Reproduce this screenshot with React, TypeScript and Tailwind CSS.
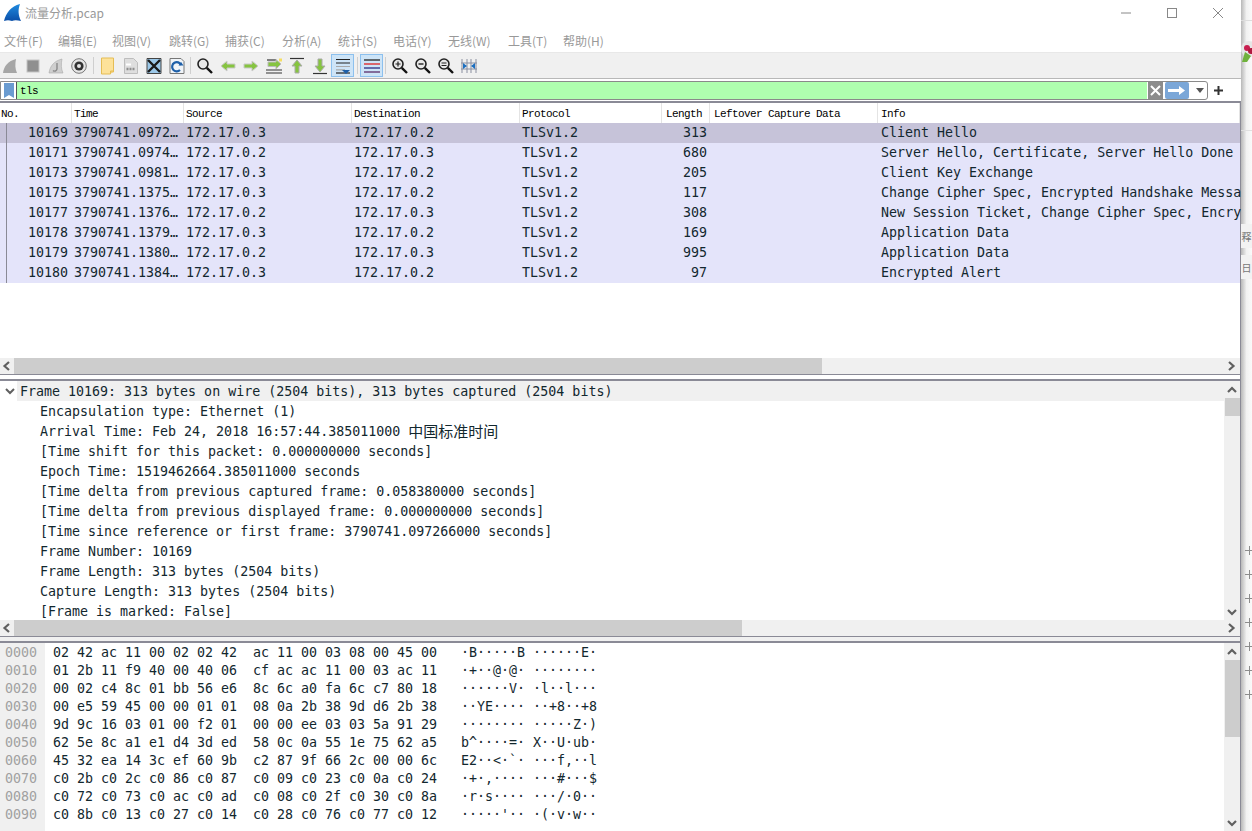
import React from "react";

const MONO = "font-['DejaVu_Sans_Mono','Noto_Sans_CJK_SC',monospace]";

const rows = [
  ["10169", "3790741.0972…", "172.17.0.3", "172.17.0.2", "313", "Client Hello"],
  ["10171", "3790741.0974…", "172.17.0.2", "172.17.0.3", "680", "Server Hello, Certificate, Server Hello Done"],
  ["10173", "3790741.0981…", "172.17.0.3", "172.17.0.2", "205", "Client Key Exchange"],
  ["10175", "3790741.1375…", "172.17.0.3", "172.17.0.2", "117", "Change Cipher Spec, Encrypted Handshake Messa"],
  ["10177", "3790741.1376…", "172.17.0.2", "172.17.0.3", "308", "New Session Ticket, Change Cipher Spec, Encry"],
  ["10178", "3790741.1379…", "172.17.0.3", "172.17.0.2", "169", "Application Data"],
  ["10179", "3790741.1380…", "172.17.0.2", "172.17.0.3", "995", "Application Data"],
  ["10180", "3790741.1384…", "172.17.0.3", "172.17.0.2", "97", "Encrypted Alert"],
];

const menus = [
  ["文件(F)", "w-[54px]"],
  ["编辑(E)", "w-[54px]"],
  ["视图(V)", "w-[57px]"],
  ["跳转(G)", "w-[56px]"],
  ["捕获(C)", "w-[57px]"],
  ["分析(A)", "w-[56px]"],
  ["统计(S)", "w-[55px]"],
  ["电话(Y)", "w-[55px]"],
  ["无线(W)", "w-[60px]"],
  ["工具(T)", "w-[55px]"],
  ["帮助(H)", "w-[55px]"],
];

const details = [
  "Encapsulation type: Ethernet (1)",
  "ARRIVAL",
  "[Time shift for this packet: 0.000000000 seconds]",
  "Epoch Time: 1519462664.385011000 seconds",
  "[Time delta from previous captured frame: 0.058380000 seconds]",
  "[Time delta from previous displayed frame: 0.000000000 seconds]",
  "[Time since reference or first frame: 3790741.097266000 seconds]",
  "Frame Number: 10169",
  "Frame Length: 313 bytes (2504 bits)",
  "Capture Length: 313 bytes (2504 bits)",
  "[Frame is marked: False]",
];

const hex = [
  ["0000", "02 42 ac 11 00 02 02 42", "ac 11 00 03 08 00 45 00", "·B·····B", "······E·"],
  ["0010", "01 2b 11 f9 40 00 40 06", "cf ac ac 11 00 03 ac 11", "·+··@·@·", "········"],
  ["0020", "00 02 c4 8c 01 bb 56 e6", "8c 6c a0 fa 6c c7 80 18", "······V·", "·l··l···"],
  ["0030", "00 e5 59 45 00 00 01 01", "08 0a 2b 38 9d d6 2b 38", "··YE····", "··+8··+8"],
  ["0040", "9d 9c 16 03 01 00 f2 01", "00 00 ee 03 03 5a 91 29", "········", "·····Z·)"],
  ["0050", "62 5e 8c a1 e1 d4 3d ed", "58 0c 0a 55 1e 75 62 a5", "b^····=·", "X··U·ub·"],
  ["0060", "45 32 ea 14 3c ef 60 9b", "c2 87 9f 66 2c 00 00 6c", "E2··<·`·", "···f,··l"],
  ["0070", "c0 2b c0 2c c0 86 c0 87", "c0 09 c0 23 c0 0a c0 24", "·+·,····", "···#···$"],
  ["0080", "c0 72 c0 73 c0 ac c0 ad", "c0 08 c0 2f c0 30 c0 8a", "·r·s····", "···/·0··"],
  ["0090", "c0 8b c0 13 c0 27 c0 14", "c0 28 c0 76 c0 77 c0 12", "·····'··", "·(·v·w··"],
];

const Chevron = ({ d }: { d: "l" | "r" | "u" | "d" }) => {
  const p = { l: "M8 2 3.5 6 8 10", r: "M4 2l4.5 4L4 10", u: "M2 8l4-4 4 4", d: "M2 4l4 4 4-4" }[d];
  return (
    <svg width="12" height="12" viewBox="0 0 12 12" fill="none" stroke="#606060" strokeWidth="2.2">
      <path d={p} />
    </svg>
  );
};

const HScroll = ({ thumb, className }: { thumb: string; className: string }) => (
  <div className={`flex items-stretch bg-[#f0f0f0] ${className}`}>
    <div className="flex w-[14px] items-center justify-center"><Chevron d="l" /></div>
    <div className={`bg-[#cdcdcd] ${thumb}`} />
    <div className="flex flex-1 items-center justify-end pr-[3px]"><Chevron d="r" /></div>
  </div>
);

const VScroll = ({ thumb }: { thumb: string }) => (
  <div className="flex w-[16px] shrink-0 flex-col items-center bg-[#f0f0f0]">
    <div className="flex h-[17px] w-full items-center justify-center"><Chevron d="u" /></div>
    <div className={`w-[15px] bg-[#cdcdcd] ${thumb}`} />
    <div className="flex-1" />
    <div className="flex h-[17px] w-full items-center justify-center"><Chevron d="d" /></div>
  </div>
);

const Sep = ({ w }: { w: string }) => (
  <div className={`flex h-full items-center justify-center ${w}`}>
    <div className="h-[17px] w-px bg-[#cfcfcf]" />
  </div>
);

const Ico = ({ active, children }: { active?: boolean; children: React.ReactNode }) => (
  <div className={`flex h-[23px] w-[23px] items-center justify-center ${active ? "border border-[#8cc0ee] bg-[#cde4f7]" : ""}`}>
    <svg width="18" height="18" viewBox="0 0 18 18" fill="none">{children}</svg>
  </div>
);

const Glass = ({ sign }: { sign?: "+" | "-" | "=" | "" }) => (
  <>
    <circle cx="7" cy="7" r="5" fill="#e8e8e8" stroke="#222" strokeWidth="1.6" />
    <path d="M10.8 10.8 16 16" stroke="#111" strokeWidth="2.4" />
    {sign === "+" && <path d="M4.5 7h5M7 4.5v5" stroke="#222" strokeWidth="1.2" />}
    {sign === "-" && <path d="M4.5 7h5" stroke="#222" strokeWidth="1.4" />}
    {sign === "=" && <path d="M4.5 6h5M4.5 8.5h5" stroke="#222" strokeWidth="1.1" />}
  </>
);

const Toolbar = () => (
  <div className="ml-[-2px] flex h-[25px] items-center bg-[#f0f0f0]">
    <Ico><path d="M2 16C3 9 7 4 15 2c-1 5-1 10 1 14Z" fill="#a6a6a6" /></Ico>
    <Ico><rect x="3" y="3" width="12" height="12" fill="#8f8f8f" stroke="#c4c4c4" /></Ico>
    <Ico>
      <path d="M2 16C3 9 7 4 15 2c-1 5-1 10 1 14Z" fill="#cfcfcf" stroke="#aaa" strokeWidth=".6" />
      <path d="M10 6v6a2.4 2.4 0 0 1-4 1.5" stroke="#8a8a8a" strokeWidth="1.4" />
    </Ico>
    <Ico>
      <circle cx="9" cy="9" r="7.3" fill="#e6e6e6" stroke="#777" />
      <circle cx="9" cy="9" r="4.6" fill="#333" />
      <circle cx="9" cy="9" r="2" fill="#e6e6e6" />
    </Ico>
    <Sep w="w-[6px]" />
    <Ico>
      <path d="M2.5 1h12v14h-3v2h-9Z" fill="#fde29a" stroke="#e5bd55" />
      <path d="M11.5 17v-3h3" fill="#f6ce6b" stroke="#e5bd55" />
    </Ico>
    <Ico>
      <path d="M2.5 1.5h9l4 4v11h-13Z" fill="#dedede" stroke="#bdbdbd" />
      <path d="M4 7.5h5" stroke="#fff" strokeWidth="2" />
      <path d="M4.5 12h9" stroke="#8e8e8e" strokeWidth="2.4" strokeDasharray="2 1" />
    </Ico>
    <Ico>
      <path d="M2 1.500h14v15H2Z" fill="#9cc8e8" stroke="#444" />
      <path d="M3 3l12 12M15 3 3 15" stroke="#1a1a1a" strokeWidth="2.4" />
    </Ico>
    <Ico>
      <path d="M2 1.500h11l3 3v12H2Z" fill="#f0f4f8" stroke="#777" />
      <path d="M13 8a4.6 4.6 0 1 0-1 5" stroke="#1d5fa8" strokeWidth="2.2" />
      <path d="M10.500 8.500h5l-2.400-3.500Z" fill="#1d5fa8" />
    </Ico>
    <Sep w="w-[5px]" />
    <Ico><Glass /></Ico>
    <Ico><path d="M2 9l6-5v3h8v4H8v3Z" fill="#86c440" stroke="#c9c9c9" /></Ico>
    <Ico><path d="M16 9l-6-5v3H2v4h8v3Z" fill="#86c440" stroke="#c9c9c9" /></Ico>
    <Ico>
      <path d="M1 13h16M1 16h16" stroke="#333" strokeWidth="1.2" />
      <path d="M2 3h9" stroke="#333" strokeWidth="1.2" />
      <path d="M16 7l-5-4.500V5H3v4.500h8V12Z" fill="#86c440" stroke="#bbb" />
      <rect x="14" y="1.500" width="3" height="3" fill="#f5de62" />
    </Ico>
    <Ico>
      <path d="M2 1.500h14" stroke="#333" strokeWidth="1.2" />
      <path d="M9 3l5 6h-3v7H7V9H4Z" fill="#86c440" stroke="#aaa" />
    </Ico>
    <Ico>
      <path d="M2 16.500h14" stroke="#333" strokeWidth="1.2" />
      <path d="M9 15l5-6h-3V2H7v7H4Z" fill="#86c440" stroke="#aaa" />
    </Ico>
    <Ico active>
      <path d="M2 2.500h14M2 6h14" stroke="#222" strokeWidth="1.2" />
      <path d="M2 9.500h14M2 12.800h9" stroke="#a8a8a8" strokeWidth="1.2" />
      <path d="M2 16h14" stroke="#222" strokeWidth="1.2" />
      <path d="M8 13h8l-4 4Z" fill="#1d5fa8" />
    </Ico>
    <Sep w="w-[6px]" />
    <Ico active>
      <path d="M1 3h16" stroke="#222" strokeWidth="1.3" />
      <path d="M1 7h16" stroke="#e02020" strokeWidth="1.3" />
      <path d="M1 11h16" stroke="#2b2b80" strokeWidth="1.3" />
      <path d="M1 15h16" stroke="#5a2a6a" strokeWidth="1.3" />
    </Ico>
    <Sep w="w-[5px]" />
    <Ico><Glass sign="+" /></Ico>
    <Ico><Glass sign="-" /></Ico>
    <Ico><Glass sign="=" /></Ico>
    <Ico>
      <path d="M2 2v14M7 2v14M11 2v14M16 2v14M1 6h16M1 12h16" stroke="#8a8fa0" strokeWidth="1" />
      <path d="M3 6l4 3-4 3ZM15 6l-4 3 4 3Z" fill="#1d6fc0" />
    </Ico>
  </div>
);

const FilterBar = () => (
  <div className="flex h-[22px] shrink-0 items-start pt-[2px]">
    <div className="flex h-[19px] w-[1208px] items-stretch rounded-r-[3px] border border-[#8a8a8a] bg-white">
      <div className="flex w-[16px] items-center justify-center border-r border-[#555]">
        <svg width="10" height="15" viewBox="0 0 10 15"><path d="M0 0h10v15L5 12 0 15Z" fill="#6a9bd0" /></svg>
      </div>
      <div className="flex flex-1 items-center bg-[#afffaf] pl-[3px] pt-[2px] font-['Liberation_Mono',monospace] text-[11px] tracking-[-0.6px] text-black">tls</div>
      <div className="ml-px flex w-[15px] items-center justify-center bg-[#8c8c8c]">
        <svg width="11" height="11" viewBox="0 0 11 11"><path d="M1 1l9 9M10 1l-9 9" stroke="#fff" strokeWidth="2" /></svg>
      </div>
      <div className="ml-[2px] flex w-[24px] items-center justify-center rounded-[2px] bg-[#7ba7d8]">
        <svg width="18" height="9" viewBox="0 0 18 9"><path d="M0 3h11V0l6 4.500L11 9V6H0Z" fill="#fff" /></svg>
      </div>
      <div className="flex w-[18px] items-center justify-end pr-[3px]">
        <svg width="8" height="5" viewBox="0 0 8 5"><path d="M0 0h8L4 5Z" fill="#555" /></svg>
      </div>
    </div>
    <div className="flex h-[19px] w-[20px] items-center justify-center">
      <svg width="9" height="9" viewBox="0 0 9 9"><path d="M4.500 0v9M0 4.500h9" stroke="#333" strokeWidth="2" /></svg>
    </div>
  </div>
);

const COLS = "grid grid-cols-[72px_112px_168px_168px_142px_48px_168px_1fr]";
const HEAD = ["No.", "Time", "Source", "Destination", "Protocol", "Length", "Leftover Capture Data", "Info"];

const PacketList = () => (
  <div className="flex h-[274px] shrink-0 flex-col border-t-2 border-r border-b border-[#8a8a96] bg-white">
    <div className={`${COLS} h-[20px] shrink-0 items-center font-['Liberation_Mono',monospace] text-[11px] tracking-[-0.6px] text-black`}>
      {HEAD.map((h, i) => (
        <div key={h} className={`flex h-full items-center border-r border-[#e4e4e4] pt-[2px] ${i === 0 ? "pl-px" : i === 5 || i === 6 ? "pl-[4px]" : i === 7 ? "pl-[3px]" : "pl-[2px]"}`}>{h}</div>
      ))}
    </div>
    <div className={`flex-1 text-[13.3px] text-[#12272e] ${MONO}`}>
      {rows.map((r, i) => (
        <div key={r[0]} className={`${COLS} h-[20px] items-center ${i === 0 ? "bg-[#c6c3d9]" : "bg-[#e4e4fa]"}`}>
          <div className="flex h-full items-center">
            <span className="ml-[6px] h-full w-px bg-[#8a8a96]" />
            <span className="flex-1 pr-[4px] text-right">{r[0]}</span>
          </div>
          <div className="whitespace-nowrap pl-[2px]">{r[1]}</div>
          <div className="pl-[2px]">{r[2]}</div>
          <div className="pl-[2px]">{r[3]}</div>
          <div className="pl-[2px]">TLSv1.2</div>
          <div className="pr-[3px] text-right">{r[4]}</div>
          <div />
          <div className="whitespace-nowrap pl-[3px]">{r[5]}</div>
        </div>
      ))}
    </div>
    <HScroll thumb="w-[808px]" className="h-[16px] shrink-0" />
  </div>
);

const DetailsPane = () => (
  <div className="flex h-[258px] shrink-0 flex-col border-t-2 border-r border-b border-[#8a8a96] bg-white">
    <div className="flex min-h-0 flex-1">
      <div className={`min-w-0 flex-1 overflow-hidden text-[13.3px] text-[#12272e] ${MONO}`}>
        <div className="flex h-[20px] items-center">
          <div className="flex w-[17px] shrink-0 items-center justify-center pl-[2px]">
            <svg width="12" height="12" viewBox="0 0 12 12" fill="none" stroke="#606060" strokeWidth="2"><path d="M2 4l4 4 4-4" /></svg>
          </div>
          <div className="flex h-full flex-1 items-center whitespace-pre bg-[#f0f0f0] pl-[3px] pt-[2px]">Frame 10169: 313 bytes on wire (2504 bits), 313 bytes captured (2504 bits)</div>
        </div>
        {details.map((d) => (
          <div key={d} className="flex h-[20px] items-center whitespace-pre pl-[40px] pt-[2px]">
            {d === "ARRIVAL" ? (
              <>Arrival Time: Feb 24, 2018 16:57:44.385011000 <span className="text-[15px]">中国标准时间</span></>
            ) : d}
          </div>
        ))}
      </div>
      <VScroll thumb="h-[18px]" />
    </div>
    <HScroll thumb="w-[728px]" className="h-[16px] shrink-0" />
  </div>
);

const HexPane = () => (
  <div className="flex min-h-0 flex-1 border-t-2 border-r border-[#8a8a96] bg-white">
    <div className={`flex min-w-0 flex-1 text-[13.3px] text-[#12272e] ${MONO}`}>
      <div className="w-[45px] shrink-0 bg-[#f0f0f0] pl-[5px] text-[#a0a0a0]">
        {hex.map((r) => <div key={r[0]} className="flex h-[18px] items-center pt-[2px]">{r[0]}</div>)}
      </div>
      <div className="pl-[8px]">
        {hex.map((r) => (
          <div key={r[0]} className="flex h-[18px] items-center whitespace-pre pt-[2px]">
            <span className="w-[200px]">{r[1]}</span>
            <span className="w-[208px]">{r[2]}</span>
            <span className="w-[72px]">{r[3]}</span>
            <span>{r[4]}</span>
          </div>
        ))}
      </div>
    </div>
    <VScroll thumb="h-[77px]" />
  </div>
);

const Fin = () => (
  <svg width="18" height="18" viewBox="0 0 18 18">
    <defs>
      <linearGradient id="fin" x1="0" y1="0" x2="0" y2="1">
        <stop offset="0" stopColor="#1f8be0" />
        <stop offset="1" stopColor="#0b4fa8" />
      </linearGradient>
    </defs>
    <path d="M0 17C2 9 7 2 16 0c-2 5-2 11 1 17-4-1-7-1-9 0-3-1-5-1-8 0Z" fill="url(#fin)" />
  </svg>
);

const Backdrop = () => (
  <div className="flex h-full w-[11px] flex-col overflow-hidden bg-gradient-to-r from-[#b8b8b8] via-[#f2f2f2] to-[#fafafa]">
    <div className="mt-[20px] h-px w-full shrink-0 bg-[#dddddd]" />
    <div className="mt-[15px] flex h-[28px] w-[14px] shrink-0 items-center justify-center">
      <svg width="14" height="28" viewBox="0 0 14 28">
        <circle cx="8" cy="13" r="8" fill="#e6e6e6" />
        <circle cx="6" cy="12" r="3" fill="#c81e50" />
        <circle cx="10" cy="15" r="3" fill="#b01a40" />
        <path d="M1 26 4 16l6 4-4 6Z" fill="#6fb23c" />
      </svg>
    </div>
    <div className="mt-[66px] h-px w-full shrink-0 bg-[#e0e0e0]" />
    <div className="mt-[93px] flex h-[24px] w-full shrink-0 items-center justify-center bg-[#f2f2f2] font-['Noto_Sans_CJK_SC',sans-serif] text-[10px] text-[#777]">释</div>
    <div className="mt-[7px] flex h-[24px] w-full shrink-0 items-center justify-center bg-[#f2f2f2] font-['Noto_Sans_CJK_SC',sans-serif] text-[10px] text-[#777]">日</div>
    <div className="mt-[266px] flex shrink-0 flex-col gap-[13px] pl-[3px]">
      {[0, 1, 2, 3, 4, 5, 6].map((i) => (
        <svg key={i} width="11" height="11" viewBox="0 0 11 11" className="shrink-0">
          <path d="M5.500 1v9M1 5.500h9" stroke="#8c8c8c" strokeWidth="1" />
        </svg>
      ))}
    </div>
  </div>
);

export default function App() {
  return (
    <div className="flex h-[831px] w-[1252px] overflow-hidden bg-white font-['Noto_Sans_CJK_SC',sans-serif]">
      <div className="flex w-[1241px] shrink-0 flex-col">
        <div className="flex h-[30px] shrink-0 items-center bg-white pb-[4px]">
          <div className="ml-[4px] mr-[3px]"><Fin /></div>
          <span className="text-[12px] text-[#999]">流量分析.pcap</span>
          <div className="ml-auto flex items-center">
            <svg width="46" height="14" viewBox="0 0 46 14"><path d="M18 7h10" stroke="#888" /></svg>
            <svg width="46" height="14" viewBox="0 0 46 14"><rect x="18.500" y="2.500" width="9" height="9" fill="none" stroke="#888" /></svg>
            <svg width="46" height="14" viewBox="0 0 46 14"><path d="M18 2l10 10M28 2 18 12" stroke="#888" /></svg>
          </div>
        </div>
        <div className="flex h-[22px] shrink-0 items-center bg-white pl-[4px] text-[12px] text-[#999]">
          {menus.map(([m, w]) => <div key={m} className={`whitespace-nowrap ${w}`}>{m}</div>)}
        </div>
        <div className="h-px shrink-0 bg-[#e8e8e8]" />
        <Toolbar />
        <div className="h-px shrink-0 bg-[#b8b8b8]" />
        <FilterBar />
        <PacketList />
        <div className="h-[4px] shrink-0 border-r border-[#8a8a96] bg-white" />
        <DetailsPane />
        <div className="h-[4px] shrink-0 border-r border-[#8a8a96] bg-[#f0f0f0]" />
        <HexPane />
      </div>
      <Backdrop />
    </div>
  );
}
